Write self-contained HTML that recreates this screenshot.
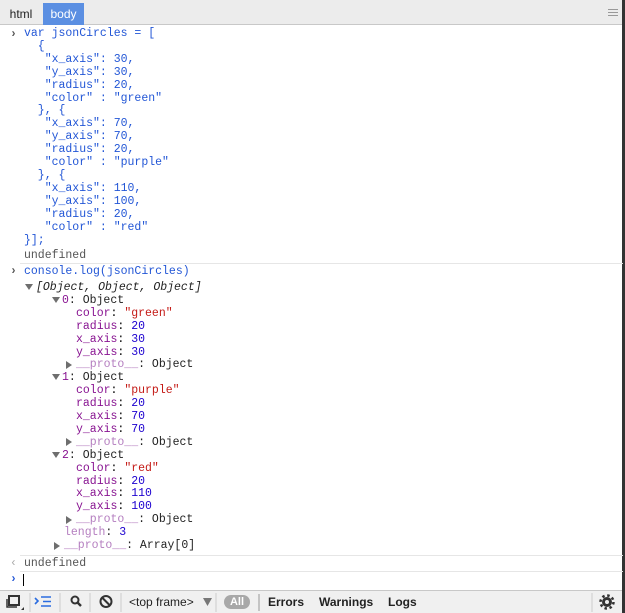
<!DOCTYPE html>
<html><head><meta charset="utf-8"><style>
*{margin:0;padding:0;box-sizing:border-box}
body{width:625px;height:613px;overflow:hidden;background:#fff;position:relative;font-family:"Liberation Sans",sans-serif}
.m{font-family:"Liberation Mono",monospace;font-size:11.5px;line-height:13px;position:absolute;white-space:pre}
.b{color:#2256d6}
.u{color:#555}
.k{color:#881391}
.s{color:#c41a16}
.n{color:#1c00cf}
.p{color:#b57fc0}
.o{color:#222}
.td{position:absolute;width:0;height:0;border-left:4px solid transparent;border-right:4px solid transparent;border-top:6px solid #6e6e6e}
.tr{position:absolute;width:0;height:0;border-top:4px solid transparent;border-bottom:4px solid transparent;border-left:6px solid #6e6e6e}
.sep{position:absolute;left:20px;right:2px;height:1px;background:#e6e6e6}
</style></head><body>
<div style="position:absolute;left:0;top:0;width:625px;height:25px;background:#ececec;border-bottom:1px solid #c8c8c8"></div>
<div style="position:absolute;left:0;top:3px;width:42px;height:22px;font-size:12px;color:#222;text-align:center;line-height:22px">html</div>
<div style="position:absolute;left:43px;top:3px;width:41px;height:22px;background:#5b8fe2;color:#fff;font-size:12px;text-align:center;line-height:22px">body</div>
<div style="position:absolute;left:608px;top:9px;width:10px;height:1px;background:#999;box-shadow:0 3px 0 #999,0 6px 0 #999"></div>
<div style="position:absolute;left:622px;top:0;width:3px;height:613px;background:#333"></div>

<div class="m" style="left:10px;top:28px;color:#555;font-weight:bold">›</div>
<div class="m b" style="left:24px;top:28px;line-height:12.9px">var jsonCircles = [
  {
   "x_axis": 30,
   "y_axis": 30,
   "radius": 20,
   "color" : "green"
  }, {
   "x_axis": 70,
   "y_axis": 70,
   "radius": 20,
   "color" : "purple"
  }, {
   "x_axis": 110,
   "y_axis": 100,
   "radius": 20,
   "color" : "red"
}];</div>
<div class="m u" style="left:24px;top:249px">undefined</div>
<div class="sep" style="top:263px"></div>
<div class="m" style="left:10px;top:265px;color:#555;font-weight:bold">›</div>
<div class="m b" style="left:24px;top:265px">console.log(jsonCircles)</div>

<div class="td" style="left:25px;top:284px"></div>
<div class="m o" style="left:36px;top:281px;font-style:italic">[Object, Object, Object]</div>

<div class="td" style="left:52px;top:297px"></div>
<div class="m o" style="left:62px;top:294px"><span class="k">0</span>: Object</div>
<div class="m" style="left:76px;top:306.8px"><span class="k">color</span>: <span class="s">"green"</span></div>
<div class="m" style="left:76px;top:319.7px"><span class="k">radius</span>: <span class="n">20</span></div>
<div class="m" style="left:76px;top:332.6px"><span class="k">x_axis</span>: <span class="n">30</span></div>
<div class="m" style="left:76px;top:345.5px"><span class="k">y_axis</span>: <span class="n">30</span></div>
<div class="tr" style="left:66px;top:360.5px"></div>
<div class="m o" style="left:76px;top:358.4px"><span class="p">__proto__</span>: Object</div>

<div class="td" style="left:52px;top:374px"></div>
<div class="m o" style="left:62px;top:371.3px"><span class="k">1</span>: Object</div>
<div class="m" style="left:76px;top:384.2px"><span class="k">color</span>: <span class="s">"purple"</span></div>
<div class="m" style="left:76px;top:397.1px"><span class="k">radius</span>: <span class="n">20</span></div>
<div class="m" style="left:76px;top:410px"><span class="k">x_axis</span>: <span class="n">70</span></div>
<div class="m" style="left:76px;top:422.9px"><span class="k">y_axis</span>: <span class="n">70</span></div>
<div class="tr" style="left:66px;top:438px"></div>
<div class="m o" style="left:76px;top:435.8px"><span class="p">__proto__</span>: Object</div>

<div class="td" style="left:52px;top:451.5px"></div>
<div class="m o" style="left:62px;top:448.7px"><span class="k">2</span>: Object</div>
<div class="m" style="left:76px;top:461.6px"><span class="k">color</span>: <span class="s">"red"</span></div>
<div class="m" style="left:76px;top:474.5px"><span class="k">radius</span>: <span class="n">20</span></div>
<div class="m" style="left:76px;top:487.4px"><span class="k">x_axis</span>: <span class="n">110</span></div>
<div class="m" style="left:76px;top:500.3px"><span class="k">y_axis</span>: <span class="n">100</span></div>
<div class="tr" style="left:66px;top:515.5px"></div>
<div class="m o" style="left:76px;top:513.2px"><span class="p">__proto__</span>: Object</div>
<div class="m o" style="left:64px;top:526.1px"><span class="p">length</span>: <span class="n">3</span></div>
<div class="tr" style="left:54px;top:541.5px"></div>
<div class="m o" style="left:64px;top:539px"><span class="p">__proto__</span>: Array[0]</div>

<div class="sep" style="top:555px"></div>
<div class="m" style="left:10px;top:557px;color:#aaa">‹</div>
<div class="m u" style="left:24px;top:557px">undefined</div>
<div class="sep" style="top:571px"></div>
<div class="m" style="left:10px;top:573px;color:#2256d6;font-weight:bold">›</div>
<div style="position:absolute;left:23px;top:574px;width:1px;height:12px;background:#000"></div>

<div style="position:absolute;left:0;top:590px;width:622px;height:23px;background:#f0f0f0;border-top:1px solid #c8c8c8"></div>
<svg style="position:absolute;left:0;top:591px" width="622" height="22">
<rect x="9" y="5" width="10" height="9" fill="none" stroke="#333" stroke-width="2"/><path d="M7 8v8h10" fill="none" stroke="#333" stroke-width="1.5"/><path d="M21 19l3 0 0-3z" fill="#333"/>
<line x1="30" y1="2" x2="30" y2="21" stroke="#ccc"/>
<path d="M35 7l3 3-3 3" fill="none" stroke="#2a6ce0" stroke-width="1.6"/><path d="M41 6h10M43 10.5h8M41 15h10" stroke="#2a6ce0" stroke-width="1.6"/>
<line x1="60" y1="2" x2="60" y2="21" stroke="#ccc"/>
<circle cx="75" cy="9" r="3.5" fill="none" stroke="#333" stroke-width="2"/><path d="M77.5 11.5l3.5 3.5" stroke="#333" stroke-width="2.4"/>
<line x1="90" y1="2" x2="90" y2="21" stroke="#ccc"/>
<circle cx="106" cy="10.5" r="5.5" fill="none" stroke="#333" stroke-width="2"/><path d="M102 6.5l8 8" stroke="#333" stroke-width="2"/>
<line x1="121" y1="2" x2="121" y2="21" stroke="#ccc"/>
<path d="M203 7h9l-4.5 8z" fill="#777"/>
<line x1="216" y1="2" x2="216" y2="21" stroke="#ccc"/>
<rect x="224" y="4" width="26" height="14" rx="7" fill="#a8a8a8"/>
<line x1="259" y1="3" x2="259" y2="20" stroke="#999"/>
<line x1="592" y1="2" x2="592" y2="21" stroke="#ccc"/>
<circle cx="607" cy="11" r="5" fill="#333"/><circle cx="607" cy="11" r="6.5" fill="none" stroke="#333" stroke-width="2.5" stroke-dasharray="2.5 2.6"/><circle cx="607" cy="11" r="2" fill="#f0f0f0"/>
</svg>
<div style="position:absolute;left:129px;top:594px;font-size:12px;color:#222;line-height:16px">&lt;top frame&gt;</div>
<div style="position:absolute;left:224px;top:595px;width:26px;font-size:11px;color:#fff;font-weight:bold;text-align:center;line-height:14px">All</div>
<div style="position:absolute;left:268px;top:594px;font-size:12px;color:#222;font-weight:bold;line-height:16px">Errors</div>
<div style="position:absolute;left:319px;top:594px;font-size:12px;color:#222;font-weight:bold;line-height:16px">Warnings</div>
<div style="position:absolute;left:388px;top:594px;font-size:12px;color:#222;font-weight:bold;line-height:16px">Logs</div>
</body></html>
